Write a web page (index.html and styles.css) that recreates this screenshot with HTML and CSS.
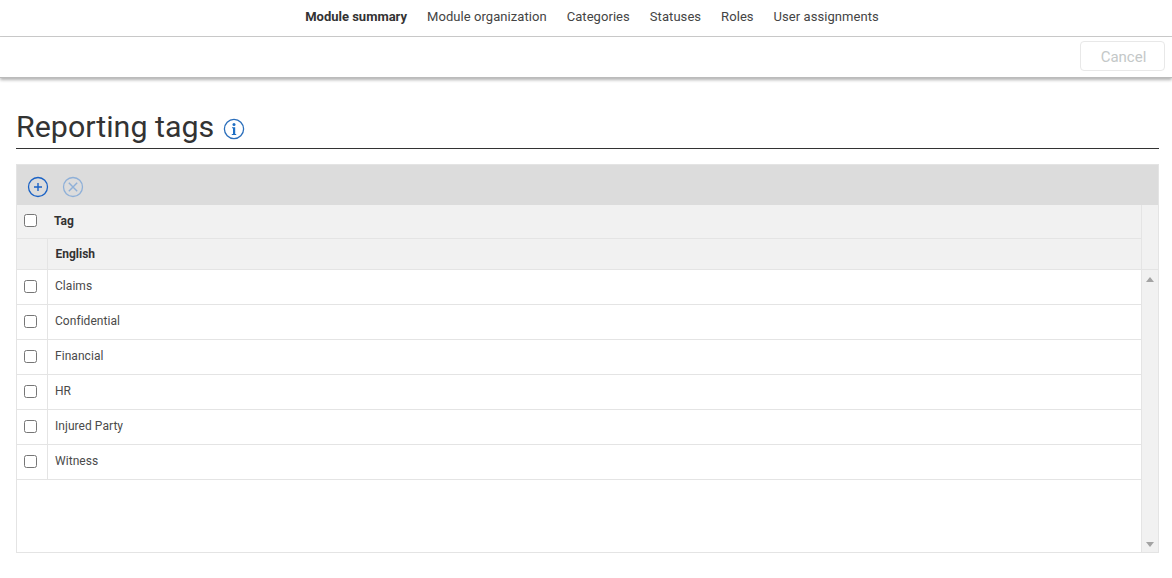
FILE: index.html
```html
<!DOCTYPE html>
<html lang="en">
<head>
<meta charset="utf-8">
<title>Reporting tags</title>
<link rel="stylesheet" href="styles.css">
</head>
<body>
<nav class="tabs">
  <a class="tab active">Module summary</a>
  <a class="tab">Module organization</a>
  <a class="tab">Categories</a>
  <a class="tab">Statuses</a>
  <a class="tab">Roles</a>
  <a class="tab">User assignments</a>
</nav>
<div class="actions"><button class="cancel" disabled>Cancel</button></div>
<main class="content">
  <header class="title-row">
    <h1>Reporting tags</h1>
    <svg class="info" width="22" height="22" viewBox="0 0 22 22" aria-hidden="true">
      <circle cx="11" cy="11" r="9.6" fill="none" stroke="#2a6ebb" stroke-width="1.3"/>
      <circle cx="11" cy="6.4" r="1.5" fill="#1f6fc4"/>
      <path d="M9 9.2h3.2v6.8h1v1H8.8v-1h1.2v-5.8H9z" fill="#1f6fc4"/>
    </svg>
  </header>
  <section class="grid">
    <div class="toolbar">
      <svg class="tool" width="22" height="22" viewBox="0 0 22 22" aria-hidden="true">
        <circle cx="11" cy="11" r="9.5" fill="none" stroke="#1a62c5" stroke-width="1.3"/>
        <path d="M11 7v8M7 11h8" stroke="#1a62c5" stroke-width="1.4" fill="none"/>
      </svg>
      <svg class="tool" width="22" height="22" viewBox="0 0 22 22" aria-hidden="true">
        <circle cx="11" cy="11" r="9.5" fill="none" stroke="#8fb0d8" stroke-width="1.3"/>
        <path d="M6.8 6.8l8.4 8.4M15.2 6.8l-8.4 8.4" stroke="#8fb0d8" stroke-width="1.4" fill="none"/>
      </svg>
    </div>
    <div class="body">
      <div class="table">
        <div class="head head-top">
          <span class="check-cell plain"><input type="checkbox"></span>
          <span class="tag-label">Tag</span>
        </div>
        <div class="head head-sub">
          <span class="check-cell"></span>
          <span class="lang">English</span>
        </div>
        <div class="row"><span class="check-cell"><input type="checkbox"></span><span class="name">Claims</span></div>
        <div class="row"><span class="check-cell"><input type="checkbox"></span><span class="name">Confidential</span></div>
        <div class="row"><span class="check-cell"><input type="checkbox"></span><span class="name">Financial</span></div>
        <div class="row"><span class="check-cell"><input type="checkbox"></span><span class="name">HR</span></div>
        <div class="row"><span class="check-cell"><input type="checkbox"></span><span class="name">Injured Party</span></div>
        <div class="row"><span class="check-cell"><input type="checkbox"></span><span class="name">Witness</span></div>
      </div>
      <div class="scroll">
        <div class="scroll-head"></div>
        <div class="scroll-track">
          <span class="arrow up"></span>
          <span class="arrow down"></span>
        </div>
      </div>
    </div>
  </section>
</main>
</body>
</html>
```

FILE: styles.css
```css
* { box-sizing: border-box; }
html, body { margin: 0; padding: 0; }
body {
  width: 1172px;
  height: 578px;
  overflow: hidden;
  background: #fff;
  color: #333;
  font-family: Roboto, "Liberation Sans", sans-serif;
  font-size: 13px;
}
.tabs {
  height: 37px;
  display: flex;
  justify-content: center;
  align-items: center;
  gap: 20px;
  padding: 0 0 3px 12px;
  border-bottom: 1px solid #ccc;
  color: #444;
  letter-spacing: .06px;
}
.tab.active { font-weight: 700; color: #333; letter-spacing: 0; }
.actions {
  height: 41px;
  display: flex;
  justify-content: flex-end;
  align-items: center;
  padding: 0 7px 2px 0;
  border-bottom: 1px solid #bbb;
  box-shadow: 0 2px 3px rgba(0, 0, 0, .3);
}
.cancel {
  width: 85px;
  height: 30px;
  background: #fff;
  border: 1px solid #e8e8e8;
  border-radius: 4px;
  color: #c4c8c8;
  font: 400 15px Roboto, "Liberation Sans", sans-serif;
  padding: 2px 0 0 2px;
}
.content { padding: 28px 13px 0 16px; }
.title-row {
  height: 43px;
  display: flex;
  align-items: flex-start;
  gap: 9px;
  border-bottom: 1px solid #333;
}
h1 {
  margin: 0;
  font-size: 30.4px;
  font-weight: 400;
  line-height: 42px;
  color: #333;
}
.info { margin-top: 12px; }
.grid {
  margin-top: 15px;
  height: 389px;
  width: 1143px;
  display: flex;
  flex-direction: column;
  border: 1px solid #e4e4e4;
}
.toolbar {
  height: 40px;
  flex: none;
  display: flex;
  align-items: center;
  gap: 12.5px;
  padding: 3px 0 0 10px;
  background: #dcdcdc;
}
.body { flex: 1; display: flex; min-height: 0; }
.table { flex: 1; min-width: 0; }
.head, .row { display: flex; align-items: stretch; }
.head { background: #f1f1f1; border-bottom: 1px solid #e4e4e4; font-size: 12px; font-weight: 700; color: #333; }
.head-top { height: 34px; }
.head-sub { height: 31px; }
.row { height: 35px; border-bottom: 1px solid #e4e4e4; color: #4a4a4a; font-size: 12px; letter-spacing: .05px; }
.check-cell {
  width: 31px;
  flex: none;
  display: flex;
  align-items: center;
  justify-content: center;
  border-right: 1px solid #e4e4e4;
  padding: 0 3px 2px 0;
}
.check-cell.plain { border-right: 0; padding-right: 4px; }
.check-cell input {
  appearance: none;
  width: 13px;
  height: 13px;
  margin: 0;
  background: #fff;
  border: 1px solid #767676;
  border-radius: 2.5px;
}
.tag-label, .lang, .name { display: flex; align-items: center; }
.tag-label { padding: 0 0 1px 6px; }
.lang { padding: 0 0 0 7.5px; }
.name { padding: 0 0 2px 7px; }
.scroll { width: 17px; flex: none; display: flex; flex-direction: column; background: #f1f1f1; border-left: 1px solid #e4e4e4; }
.scroll-head { height: 65px; flex: none; border-bottom: 1px solid #e4e4e4; }
.scroll-track { flex: 1; display: flex; flex-direction: column; justify-content: space-between; align-items: center; padding: 7px 0 5px; }
.arrow { width: 0; height: 0; border-left: 4px solid transparent; border-right: 4px solid transparent; }
.arrow.up { border-bottom: 5px solid #a3a3a3; }
.arrow.down { border-top: 5px solid #a3a3a3; }
```
